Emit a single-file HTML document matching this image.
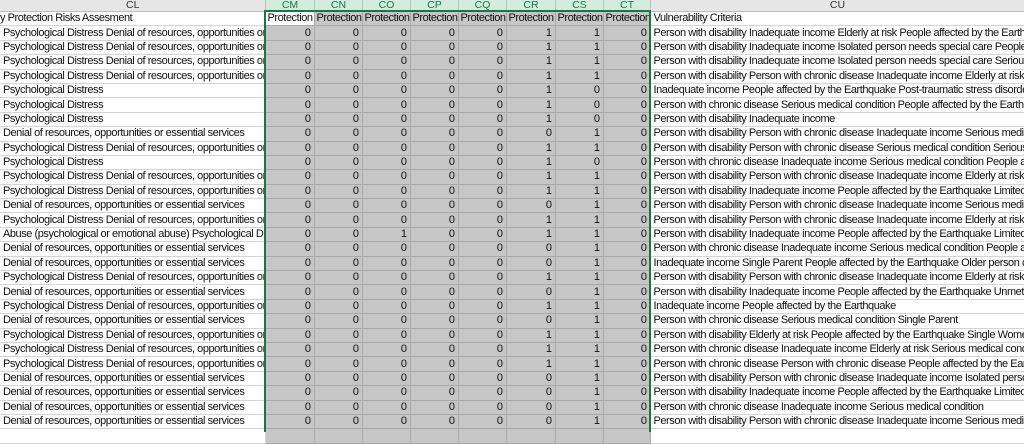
<!DOCTYPE html>
<html><head><meta charset="utf-8"><style>
body{margin:0;width:1024px;height:432px;overflow:hidden;background:#fff;position:relative;font-family:"Liberation Sans",sans-serif}
table{border-collapse:collapse;table-layout:fixed;width:1024px;position:absolute;left:0;top:0}
td{border-right:1px solid #d4d4d4;border-bottom:1px solid #d4d4d4;padding:0 2px 0 3px;white-space:nowrap;overflow:hidden;font-size:11px;letter-spacing:-0.45px;color:#111;height:13.4px;line-height:13px}
tr.h td{height:10px;line-height:10px;background:#e6e6e6;text-align:center;color:#333;font-size:10.5px;letter-spacing:0;border-color:#bdbdbd;border-bottom:1px solid #bdbdbd}
tr.h td.s{background:#d2ecdd;color:#217346;border-bottom:2px solid #217346}
td.g{background:#c6c6c6;text-align:right;border-color:#a9a9a9;padding-right:3px}
td.w{background:#fff}
td.p{text-align:left;padding:0 0 0 2px}
.v{position:absolute;top:10px;width:2px;height:422px;background:#217346}
</style></head><body>
<table>
<colgroup><col style="width:265px"><col style="width:49px"><col style="width:48px"><col style="width:48px"><col style="width:48px"><col style="width:48px"><col style="width:49px"><col style="width:48px"><col style="width:47px"><col style="width:374px"></colgroup>
<tr class="h"><td>CL</td><td class="s">CM</td><td class="s">CN</td><td class="s">CO</td><td class="s">CP</td><td class="s">CQ</td><td class="s">CR</td><td class="s">CS</td><td class="s">CT</td><td>CU</td></tr>
<tr><td style="padding-left:0">y Protection Risks Assesment</td><td class="g w p">Protection</td><td class="g p">Protection</td><td class="g p">Protection</td><td class="g p">Protection</td><td class="g p">Protection</td><td class="g p">Protection</td><td class="g p">Protection</td><td class="g p">Protection</td><td>Vulnerability Criteria</td></tr>
<tr><td>Psychological Distress Denial of resources, opportunities or essential</td><td class="g">0</td><td class="g">0</td><td class="g">0</td><td class="g">0</td><td class="g">0</td><td class="g">1</td><td class="g">1</td><td class="g">0</td><td>Person with disability Inadequate income Elderly at risk People affected by the Earthquake</td></tr>
<tr><td>Psychological Distress Denial of resources, opportunities or essential</td><td class="g">0</td><td class="g">0</td><td class="g">0</td><td class="g">0</td><td class="g">0</td><td class="g">1</td><td class="g">1</td><td class="g">0</td><td>Person with disability Inadequate income Isolated person needs special care People affected</td></tr>
<tr><td>Psychological Distress Denial of resources, opportunities or essential</td><td class="g">0</td><td class="g">0</td><td class="g">0</td><td class="g">0</td><td class="g">0</td><td class="g">1</td><td class="g">1</td><td class="g">0</td><td>Person with disability Inadequate income Isolated person needs special care Serious medical</td></tr>
<tr><td>Psychological Distress Denial of resources, opportunities or essential</td><td class="g">0</td><td class="g">0</td><td class="g">0</td><td class="g">0</td><td class="g">0</td><td class="g">1</td><td class="g">1</td><td class="g">0</td><td>Person with disability Person with chronic disease Inadequate income Elderly at risk Serious</td></tr>
<tr><td>Psychological Distress</td><td class="g">0</td><td class="g">0</td><td class="g">0</td><td class="g">0</td><td class="g">0</td><td class="g">1</td><td class="g">0</td><td class="g">0</td><td>Inadequate income People affected by the Earthquake Post-traumatic stress disorder</td></tr>
<tr><td>Psychological Distress</td><td class="g">0</td><td class="g">0</td><td class="g">0</td><td class="g">0</td><td class="g">0</td><td class="g">1</td><td class="g">0</td><td class="g">0</td><td>Person with chronic disease Serious medical condition People affected by the Earthquake</td></tr>
<tr><td>Psychological Distress</td><td class="g">0</td><td class="g">0</td><td class="g">0</td><td class="g">0</td><td class="g">0</td><td class="g">1</td><td class="g">0</td><td class="g">0</td><td>Person with disability Inadequate income</td></tr>
<tr><td>Denial of resources, opportunities or essential services</td><td class="g">0</td><td class="g">0</td><td class="g">0</td><td class="g">0</td><td class="g">0</td><td class="g">0</td><td class="g">1</td><td class="g">0</td><td>Person with disability Person with chronic disease Inadequate income Serious medical condition</td></tr>
<tr><td>Psychological Distress Denial of resources, opportunities or essential</td><td class="g">0</td><td class="g">0</td><td class="g">0</td><td class="g">0</td><td class="g">0</td><td class="g">1</td><td class="g">1</td><td class="g">0</td><td>Person with disability Person with chronic disease Serious medical condition Serious medical</td></tr>
<tr><td>Psychological Distress</td><td class="g">0</td><td class="g">0</td><td class="g">0</td><td class="g">0</td><td class="g">0</td><td class="g">1</td><td class="g">0</td><td class="g">0</td><td>Person with chronic disease Inadequate income Serious medical condition People affected</td></tr>
<tr><td>Psychological Distress Denial of resources, opportunities or essential</td><td class="g">0</td><td class="g">0</td><td class="g">0</td><td class="g">0</td><td class="g">0</td><td class="g">1</td><td class="g">1</td><td class="g">0</td><td>Person with disability Person with chronic disease Inadequate income Elderly at risk People</td></tr>
<tr><td>Psychological Distress Denial of resources, opportunities or essential</td><td class="g">0</td><td class="g">0</td><td class="g">0</td><td class="g">0</td><td class="g">0</td><td class="g">1</td><td class="g">1</td><td class="g">0</td><td>Person with disability Inadequate income People affected by the Earthquake Limited</td></tr>
<tr><td>Denial of resources, opportunities or essential services</td><td class="g">0</td><td class="g">0</td><td class="g">0</td><td class="g">0</td><td class="g">0</td><td class="g">0</td><td class="g">1</td><td class="g">0</td><td>Person with disability Person with chronic disease Inadequate income Serious medical condition</td></tr>
<tr><td>Psychological Distress Denial of resources, opportunities or essential</td><td class="g">0</td><td class="g">0</td><td class="g">0</td><td class="g">0</td><td class="g">0</td><td class="g">1</td><td class="g">1</td><td class="g">0</td><td>Person with disability Person with chronic disease Inadequate income Elderly at risk Serious</td></tr>
<tr><td>Abuse (psychological or emotional abuse) Psychological Distress</td><td class="g">0</td><td class="g">0</td><td class="g">1</td><td class="g">0</td><td class="g">0</td><td class="g">1</td><td class="g">1</td><td class="g">0</td><td>Person with disability Inadequate income People affected by the Earthquake Limited</td></tr>
<tr><td>Denial of resources, opportunities or essential services</td><td class="g">0</td><td class="g">0</td><td class="g">0</td><td class="g">0</td><td class="g">0</td><td class="g">0</td><td class="g">1</td><td class="g">0</td><td>Person with chronic disease Inadequate income Serious medical condition People affected</td></tr>
<tr><td>Denial of resources, opportunities or essential services</td><td class="g">0</td><td class="g">0</td><td class="g">0</td><td class="g">0</td><td class="g">0</td><td class="g">0</td><td class="g">1</td><td class="g">0</td><td>Inadequate income Single Parent People affected by the Earthquake Older person care</td></tr>
<tr><td>Psychological Distress Denial of resources, opportunities or essential</td><td class="g">0</td><td class="g">0</td><td class="g">0</td><td class="g">0</td><td class="g">0</td><td class="g">1</td><td class="g">1</td><td class="g">0</td><td>Person with disability Person with chronic disease Inadequate income Elderly at risk People</td></tr>
<tr><td>Denial of resources, opportunities or essential services</td><td class="g">0</td><td class="g">0</td><td class="g">0</td><td class="g">0</td><td class="g">0</td><td class="g">0</td><td class="g">1</td><td class="g">0</td><td>Person with disability Inadequate income People affected by the Earthquake Unmet needs</td></tr>
<tr><td>Psychological Distress Denial of resources, opportunities or essential</td><td class="g">0</td><td class="g">0</td><td class="g">0</td><td class="g">0</td><td class="g">0</td><td class="g">1</td><td class="g">1</td><td class="g">0</td><td>Inadequate income People affected by the Earthquake</td></tr>
<tr><td>Denial of resources, opportunities or essential services</td><td class="g">0</td><td class="g">0</td><td class="g">0</td><td class="g">0</td><td class="g">0</td><td class="g">0</td><td class="g">1</td><td class="g">0</td><td>Person with chronic disease Serious medical condition Single Parent</td></tr>
<tr><td>Psychological Distress Denial of resources, opportunities or essential</td><td class="g">0</td><td class="g">0</td><td class="g">0</td><td class="g">0</td><td class="g">0</td><td class="g">1</td><td class="g">1</td><td class="g">0</td><td>Person with disability Elderly at risk People affected by the Earthquake Single Women</td></tr>
<tr><td>Psychological Distress Denial of resources, opportunities or essential</td><td class="g">0</td><td class="g">0</td><td class="g">0</td><td class="g">0</td><td class="g">0</td><td class="g">1</td><td class="g">1</td><td class="g">0</td><td>Person with chronic disease Inadequate income Elderly at risk Serious medical condition</td></tr>
<tr><td>Psychological Distress Denial of resources, opportunities or essential</td><td class="g">0</td><td class="g">0</td><td class="g">0</td><td class="g">0</td><td class="g">0</td><td class="g">1</td><td class="g">1</td><td class="g">0</td><td>Person with chronic disease Person with chronic disease People affected by the Earthquake</td></tr>
<tr><td>Denial of resources, opportunities or essential services</td><td class="g">0</td><td class="g">0</td><td class="g">0</td><td class="g">0</td><td class="g">0</td><td class="g">0</td><td class="g">1</td><td class="g">0</td><td>Person with disability Person with chronic disease Inadequate income Isolated person</td></tr>
<tr><td>Denial of resources, opportunities or essential services</td><td class="g">0</td><td class="g">0</td><td class="g">0</td><td class="g">0</td><td class="g">0</td><td class="g">0</td><td class="g">1</td><td class="g">0</td><td>Person with disability Inadequate income People affected by the Earthquake Limited</td></tr>
<tr><td>Denial of resources, opportunities or essential services</td><td class="g">0</td><td class="g">0</td><td class="g">0</td><td class="g">0</td><td class="g">0</td><td class="g">0</td><td class="g">1</td><td class="g">0</td><td>Person with chronic disease Inadequate income Serious medical condition</td></tr>
<tr><td>Denial of resources, opportunities or essential services</td><td class="g">0</td><td class="g">0</td><td class="g">0</td><td class="g">0</td><td class="g">0</td><td class="g">0</td><td class="g">1</td><td class="g">0</td><td>Person with disability Person with chronic disease Inadequate income Serious medical condition</td></tr>
<tr><td>&nbsp;</td><td class="g"></td><td class="g"></td><td class="g"></td><td class="g"></td><td class="g"></td><td class="g"></td><td class="g"></td><td class="g"></td><td></td></tr>
</table>
<div class="v" style="left:264px"></div>
<div class="v" style="left:649px"></div>
</body></html>
